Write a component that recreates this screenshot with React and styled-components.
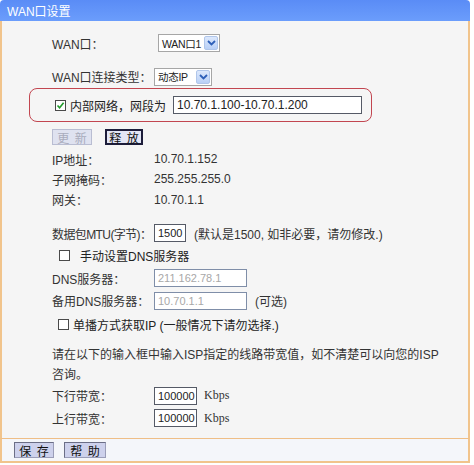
import styled, { createGlobalStyle } from 'styled-components';

const Global = createGlobalStyle`
  body {
    margin: 0;
    background: #ffffff;
    font-family: "Liberation Sans", "Noto Sans CJK SC", sans-serif;
    font-size: 12px;
    color: #222;
    white-space: nowrap;
  }
`;

const Panel = styled.div`
  width: 470px;
  display: flex;
  flex-direction: column;
`;

const Header = styled.div`
  height: 21px;
  display: flex;
  align-items: center;
  padding-left: 7px;
  border-radius: 4px 4px 0 0;
  background: linear-gradient(#5a8cf6, #6b9dfc);
  color: #fff;
  font-size: 12px;
`;

const Body = styled.div`
  display: flex;
  flex-direction: column;
  padding-bottom: 8px;
  background: #f5f5f5;
  border-left: 2px solid #f1c48c;
  border-right: 2px solid #f1c48c;
  border-bottom: 1px solid #efbe86;
`;

const Row = styled.div`
  height: ${(p) => p.h || 20}px;
  margin-top: ${(p) => p.top || 0}px;
  padding-left: 50px;
  display: flex;
  align-items: center;
`;

const Label = styled.span`
  width: 102px;
  flex-shrink: 0;
  color: #333;
  letter-spacing: ${(p) => (p.tight ? '-0.6px' : 'normal')};
`;

const Value = styled.span`
  color: #333;
`;

const Select = styled.div`
  margin-left: ${(p) => p.offset || 0}px;
  width: ${(p) => p.w || 58}px;
  height: 18px;
  box-sizing: border-box;
  border: 1px solid #a6a6a6;
  background: #fff;
  display: flex;
  align-items: center;
  justify-content: space-between;
  padding: 0 1px 0 3px;
  font-size: 10.5px;
  letter-spacing: -0.3px;
`;

const Arrow = styled.span`
  width: 14px;
  height: 14px;
  flex-shrink: 0;
  margin-left: 3px;
  background: linear-gradient(#dce8fc, #b9d0f6);
  border: 1px solid #b0c6ea;
  border-radius: 2px;
  box-sizing: border-box;
  display: flex;
  align-items: center;
  justify-content: center;
`;

const Highlight = styled.div`
  margin-left: 27px;
  width: 343px;
  height: 34px;
  box-sizing: border-box;
  border: 1px solid #c24650;
  border-radius: 8px;
  padding-left: 25px;
  display: flex;
  align-items: center;
`;

const Box = styled.span`
  width: 11px;
  height: 11px;
  box-sizing: border-box;
  border: 1px solid #4a4a4a;
  background: #fff;
  margin-left: ${(p) => p.offset || 0}px;
  margin-right: ${(p) => p.gap || 4}px;
  flex-shrink: 0;
  display: flex;
  align-items: center;
  justify-content: center;
`;

const Input = styled.div`
  width: ${(p) => p.w}px;
  height: 18px;
  flex-shrink: 0;
  box-sizing: border-box;
  border: 1px solid ${(p) => (p.disabled ? '#7f8ea8' : '#555a66')};
  background: #fff;
  color: ${(p) => (p.disabled ? '#a8a8a8' : '#222')};
  font-size: ${(p) => p.fs || 12}px;
  margin-left: ${(p) => p.offset || 0}px;
  margin-right: ${(p) => p.gap || 0}px;
  display: flex;
  align-items: center;
  padding-left: 3px;
  overflow: hidden;
`;

const ButtonRow = styled.div`
  height: 27px;
  padding: 7px 0 0 50px;
  box-sizing: border-box;
  display: flex;
  gap: 13px;
  align-items: flex-start;
`;

const Button = styled.div`
  width: ${(p) => p.w || 40}px;
  height: 16px;
  box-sizing: border-box;
  display: flex;
  align-items: center;
  justify-content: center;
  word-spacing: 2px;
  font-size: 12px;
  background: ${(p) => (p.variant === 'disabled' ? '#dfe2f0' : p.variant === 'active' ? '#e3e6f5' : '#cdd1ec')};
  color: ${(p) => (p.variant === 'disabled' ? '#a9acbc' : '#111')};
  border: ${(p) =>
    p.variant === 'disabled' ? '1px solid #b9bdd2' : p.variant === 'active' ? '2px solid #1d1d3a' : '1px solid #6b6e86'};
  border-right-color: ${(p) => (p.variant === 'footer' ? '#9a9db8' : '')};
  border-bottom-color: ${(p) => (p.variant === 'footer' ? '#9a9db8' : '')};
`;

const Note = styled.span`
  color: #333;
  margin-left: ${(p) => p.offset || 0}px;
`;

const Unit = styled.span`
  font-family: "Liberation Serif", serif;
  font-size: 12px;
  margin-left: 7px;
  color: #333;
`;

const Paragraph = styled.p`
  margin: 8px 0 0;
  padding-left: 50px;
  padding-right: 20px;
  line-height: 20px;
  color: #333;
  white-space: normal;
`;

const Footer = styled.div`
  height: 24px;
  box-sizing: border-box;
  padding: 3px 0 0 12px;
  display: flex;
  gap: 10px;
  background: #f4f6fa;
  border-left: 2px solid #f1c48c;
  border-right: 2px solid #f1c48c;
  border-bottom: 2px solid #f1c48c;
`;

function Chevron() {
  return (
    <svg width="9" height="6" viewBox="0 0 9 6">
      <path d="M1 1 L4.5 4.5 L8 1" stroke="#2d5fb8" strokeWidth="1.8" fill="none" />
    </svg>
  );
}

function Check() {
  return (
    <svg width="9" height="9" viewBox="0 0 9 9">
      <path d="M1.5 4.5 L3.6 6.8 L7.6 1.8" stroke="#1f9a2a" strokeWidth="1.6" fill="none" />
    </svg>
  );
}

export default function App() {
  return (
    <Panel>
      <Global />
      <Header>WAN口设置</Header>
      <Body>
        <Row h={44}>
          <Label>WAN口：</Label>
          <Select offset={4} w={62}>
            WAN口1
            <Arrow>
              <Chevron />
            </Arrow>
          </Select>
        </Row>
        <Row h={23}>
          <Label>WAN口连接类型：</Label>
          <Select>
            动态IP
            <Arrow>
              <Chevron />
            </Arrow>
          </Select>
        </Row>
        <Highlight>
          <Box gap={4}>
            <Check />
          </Box>
          <span>内部网络，网段为</span>
          <Input w={189} offset={7}>10.70.1.100-10.70.1.200</Input>
        </Highlight>
        <ButtonRow>
          <Button variant="disabled">更 新</Button>
          <Button variant="active" w={38}>释 放</Button>
        </ButtonRow>
        <Row h={20}>
          <Label>IP地址：</Label>
          <Value>10.70.1.152</Value>
        </Row>
        <Row h={20}>
          <Label>子网掩码：</Label>
          <Value>255.255.255.0</Value>
        </Row>
        <Row h={21}>
          <Label>网关：</Label>
          <Value>10.70.1.1</Value>
        </Row>
        <Row h={22} top={12}>
          <Label tight>数据包MTU(字节)：</Label>
          <Input w={32} fs={11} gap={8}>1500</Input>
          <Note>(默认是1500, 如非必要，请勿修改.)</Note>
        </Row>
        <Row h={23}>
          <Box offset={7} gap={10} />
          <span>手动设置DNS服务器</span>
        </Row>
        <Row h={22}>
          <Label>DNS服务器：</Label>
          <Input w={93} fs={11} disabled>211.162.78.1</Input>
        </Row>
        <Row h={23}>
          <Label>备用DNS服务器：</Label>
          <Input w={93} fs={11} disabled gap={8}>10.70.1.1</Input>
          <Note>(可选)</Note>
        </Row>
        <Row h={25}>
          <Box offset={6} gap={4} />
          <span>单播方式获取IP (一般情况下请勿选择.)</span>
        </Row>
        <Paragraph>
          请在以下的输入框中输入ISP指定的线路带宽值，如不清楚可以向您的ISP咨询。
        </Paragraph>
        <Row h={21}>
          <Label>下行带宽：</Label>
          <Input w={43} fs={11}>100000</Input>
          <Unit>Kbps</Unit>
        </Row>
        <Row h={24}>
          <Label>上行带宽：</Label>
          <Input w={43} fs={11}>100000</Input>
          <Unit>Kbps</Unit>
        </Row>
      </Body>
      <Footer>
        <Button variant="footer">保 存</Button>
        <Button variant="footer" w={42}>帮 助</Button>
      </Footer>
    </Panel>
  );
}
